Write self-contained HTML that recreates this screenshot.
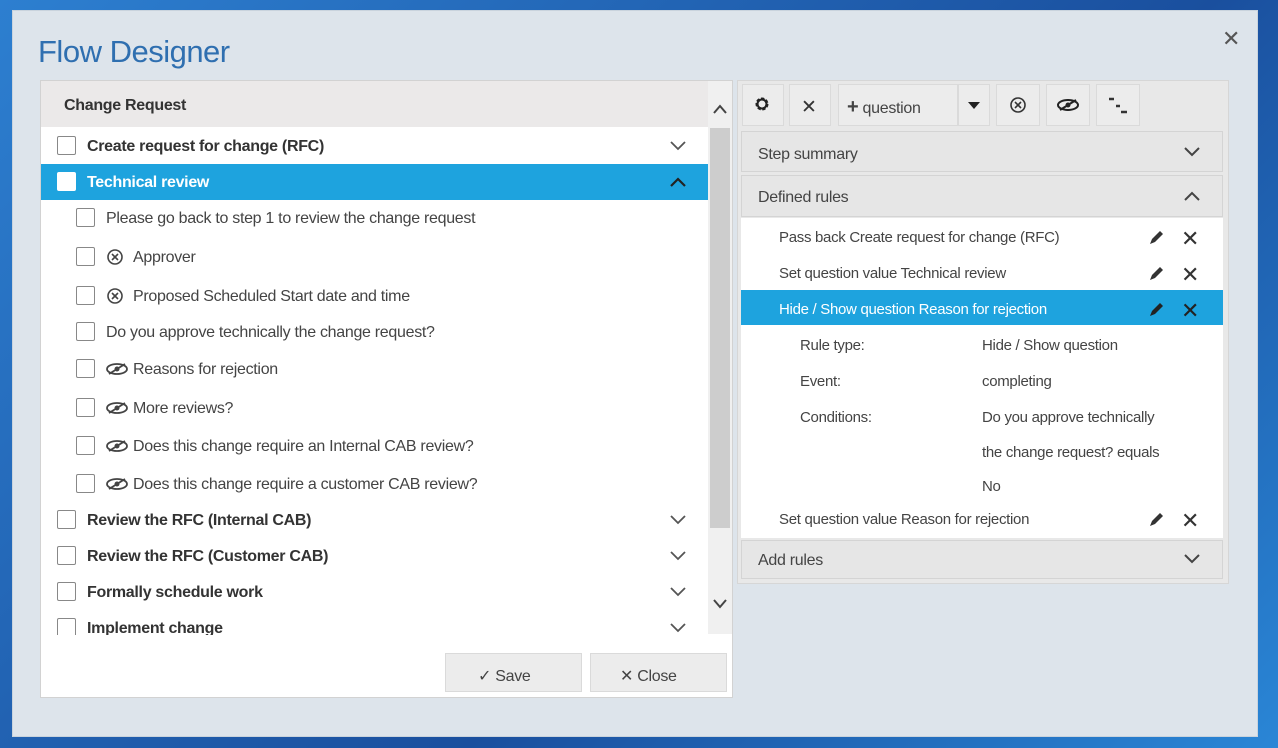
<!DOCTYPE html>
<html><head><meta charset="utf-8"><style>
*{box-sizing:border-box;margin:0;padding:0}
body{width:1278px;height:748px;overflow:hidden;background:linear-gradient(135deg,#2d7fd0,#1a4f9e 60%,#2a86d6);font-family:"Liberation Sans",sans-serif;color:#333;position:relative}
.abs{position:absolute}
#dlg{left:12px;top:10px;width:1246px;height:727px;background:#dde4eb;border:1px solid #c9d3dd}
.t{position:absolute;white-space:nowrap;font-size:16px;letter-spacing:-0.3px;margin-top:2px}
.cb{position:absolute;width:19px;height:19px;border:1.5px solid #888;background:#fff;border-radius:2px}
.chev{position:absolute}
.btn{position:absolute;background:#ececec;border:1px solid #dadada}
</style></head><body>
<div id="dlg" class="abs"></div>
<div class="t" style="left:38px;top:32px;font-size:31px;color:#2f6fb0;letter-spacing:-0.5px">Flow Designer</div>
<div class="t" style="left:1222px;top:24px;font-size:22px;color:#555">✕</div>

<!-- left panel -->
<div class="abs" style="left:40px;top:80px;width:693px;height:618px;background:#fff;border:1px solid #d2d2d2"></div>
<div class="abs" style="left:41px;top:81px;width:667px;height:46px;background:#ebe9e9"></div>
<div class="t" style="left:64px;top:95px;font-weight:bold;font-size:16px">Change Request</div>
<div class="abs" style="left:708px;top:81px;width:24px;height:553px;background:#f0f0f0"></div>
<div class="abs" style="left:710px;top:128px;width:20px;height:400px;background:#cdcdcd"></div>
<svg class="chev" style="left:712px;top:103px" width="16" height="12"><path d="M2 10 L8 3 L14 10" stroke="#444" stroke-width="2" fill="none"/></svg>
<svg class="chev" style="left:712px;top:598px" width="16" height="12"><path d="M2 2 L8 9 L14 2" stroke="#444" stroke-width="2" fill="none"/></svg>

<div class="abs" style="left:41px;top:164px;width:667px;height:36px;background:#1ea3de"></div>

<div class="cb" style="left:57px;top:136px"></div><div class="t" style="left:87px;top:136px;font-weight:bold">Create request for change (RFC)</div>
<svg class="chev" style="left:669px;top:140px" width="18" height="12"><path d="M2 2 L9 9 L16 2" stroke="#555" stroke-width="1.8" fill="none"/></svg>
<div class="cb" style="left:57px;top:172px;border-color:#fff"></div><div class="t" style="left:87px;top:172px;font-weight:bold;color:#fff">Technical review</div>
<svg class="chev" style="left:669px;top:176px" width="18" height="12"><path d="M2 10 L9 3 L16 10" stroke="#222" stroke-width="2.2" fill="none"/></svg>

<div class="cb" style="left:76px;top:208px"></div><div class="t" style="left:106px;top:208px;color:#444">Please go back to step 1 to review the change request</div>
<div class="cb" style="left:76px;top:247px"></div><svg class="abs" style="left:106px;top:248px" width="18" height="18"><circle cx="9" cy="9" r="7" stroke="#444" stroke-width="1.6" fill="none"/><path d="M6 6L12 12M12 6L6 12" stroke="#444" stroke-width="1.6"/></svg><div class="t" style="left:133px;top:247px;color:#444">Approver</div>
<div class="cb" style="left:76px;top:286px"></div><svg class="abs" style="left:106px;top:287px" width="18" height="18"><circle cx="9" cy="9" r="7" stroke="#444" stroke-width="1.6" fill="none"/><path d="M6 6L12 12M12 6L6 12" stroke="#444" stroke-width="1.6"/></svg><div class="t" style="left:133px;top:286px;color:#444">Proposed Scheduled Start date and time</div>
<div class="cb" style="left:76px;top:322px"></div><div class="t" style="left:106px;top:322px;color:#444">Do you approve technically the change request?</div>
<div class="cb" style="left:76px;top:359px"></div><svg class="abs" style="left:105px;top:362px" width="24" height="14"><ellipse cx="12" cy="7" rx="10" ry="5" stroke="#444" stroke-width="1.8" fill="none"/><circle cx="12" cy="7" r="2.5" fill="#444"/><path d="M4 12L20 2" stroke="#444" stroke-width="1.8"/></svg><div class="t" style="left:133px;top:359px;color:#444">Reasons for rejection</div>
<div class="cb" style="left:76px;top:398px"></div><svg class="abs" style="left:105px;top:401px" width="24" height="14"><ellipse cx="12" cy="7" rx="10" ry="5" stroke="#444" stroke-width="1.8" fill="none"/><circle cx="12" cy="7" r="2.5" fill="#444"/><path d="M4 12L20 2" stroke="#444" stroke-width="1.8"/></svg><div class="t" style="left:133px;top:398px;color:#444">More reviews?</div>
<div class="cb" style="left:76px;top:436px"></div><svg class="abs" style="left:105px;top:439px" width="24" height="14"><ellipse cx="12" cy="7" rx="10" ry="5" stroke="#444" stroke-width="1.8" fill="none"/><circle cx="12" cy="7" r="2.5" fill="#444"/><path d="M4 12L20 2" stroke="#444" stroke-width="1.8"/></svg><div class="t" style="left:133px;top:436px;color:#444">Does this change require an Internal CAB review?</div>
<div class="cb" style="left:76px;top:474px"></div><svg class="abs" style="left:105px;top:477px" width="24" height="14"><ellipse cx="12" cy="7" rx="10" ry="5" stroke="#444" stroke-width="1.8" fill="none"/><circle cx="12" cy="7" r="2.5" fill="#444"/><path d="M4 12L20 2" stroke="#444" stroke-width="1.8"/></svg><div class="t" style="left:133px;top:474px;color:#444">Does this change require a customer CAB review?</div>

<div class="cb" style="left:57px;top:510px"></div><div class="t" style="left:87px;top:510px;font-weight:bold">Review the RFC (Internal CAB)</div>
<svg class="chev" style="left:669px;top:514px" width="18" height="12"><path d="M2 2 L9 9 L16 2" stroke="#555" stroke-width="1.8" fill="none"/></svg>
<div class="cb" style="left:57px;top:546px"></div><div class="t" style="left:87px;top:546px;font-weight:bold">Review the RFC (Customer CAB)</div>
<svg class="chev" style="left:669px;top:550px" width="18" height="12"><path d="M2 2 L9 9 L16 2" stroke="#555" stroke-width="1.8" fill="none"/></svg>
<div class="cb" style="left:57px;top:582px"></div><div class="t" style="left:87px;top:582px;font-weight:bold">Formally schedule work</div>
<svg class="chev" style="left:669px;top:586px" width="18" height="12"><path d="M2 2 L9 9 L16 2" stroke="#555" stroke-width="1.8" fill="none"/></svg>
<div class="abs" style="left:41px;top:616px;width:667px;height:19px;overflow:hidden">
<div class="cb" style="left:16px;top:2px"></div><div class="t" style="left:46px;top:2px;font-weight:bold">Implement change</div></div>
<svg class="chev" style="left:669px;top:622px" width="18" height="12"><path d="M2 2 L9 9 L16 2" stroke="#555" stroke-width="1.8" fill="none"/></svg>

<div class="btn" style="left:445px;top:653px;width:137px;height:39px"></div>
<div class="t" style="left:478px;top:664px;color:#444">✓ Save</div>
<div class="btn" style="left:590px;top:653px;width:137px;height:39px"></div>
<div class="t" style="left:620px;top:664px;color:#444">✕ Close</div>

<!-- right panel -->
<div class="abs" style="left:737px;top:80px;width:492px;height:504px;background:#e8e8e8;border:1px solid #d6d6d6"></div>
<div class="btn" style="left:742px;top:84px;width:42px;height:42px"></div><svg class="abs" style="left:754px;top:96px" width="16" height="16"><circle cx="8" cy="8" r="5" stroke="#222" stroke-width="3" fill="none" stroke-dasharray="3 1.5"/><circle cx="8" cy="8" r="4.5" stroke="#222" stroke-width="2" fill="none"/></svg>
<div class="btn" style="left:789px;top:84px;width:42px;height:42px"></div><div class="t" style="left:801px;top:94px;font-size:19px;color:#333">✕</div>
<div class="btn" style="left:838px;top:84px;width:120px;height:42px"></div><div class="t" style="left:847px;top:94px;color:#444"><b style="font-size:20px">+</b> question</div>
<div class="btn" style="left:958px;top:84px;width:32px;height:42px"></div><svg class="abs" style="left:968px;top:102px" width="12" height="8"><path d="M0 0H12L6 7Z" fill="#222"/></svg>
<div class="btn" style="left:996px;top:84px;width:44px;height:42px"></div><svg class="abs" style="left:1009px;top:96px" width="18" height="18"><circle cx="9" cy="9" r="7" stroke="#333" stroke-width="1.6" fill="none"/><path d="M6 6L12 12M12 6L6 12" stroke="#333" stroke-width="1.6"/></svg>
<div class="btn" style="left:1046px;top:84px;width:44px;height:42px"></div><svg class="abs" style="left:1056px;top:98px" width="24" height="14"><ellipse cx="12" cy="7" rx="10" ry="5" stroke="#222" stroke-width="2" fill="none"/><circle cx="12" cy="7" r="2.5" fill="#222"/><path d="M4 12L20 2" stroke="#222" stroke-width="2"/></svg>
<div class="btn" style="left:1096px;top:84px;width:44px;height:42px"></div><svg class="abs" style="left:1106px;top:96px" width="24" height="20"><path d="M3 3h5M10 10h4M15 16h6" stroke="#333" stroke-width="2.4"/></svg>

<div class="abs" style="left:741px;top:131px;width:482px;height:41px;background:#e6e6e6;border:1px solid #d4d4d4"></div>
<div class="t" style="left:758px;top:144px;color:#444">Step summary</div>
<svg class="chev" style="left:1183px;top:146px" width="18" height="12"><path d="M2 2 L9 9 L16 2" stroke="#444" stroke-width="2" fill="none"/></svg>
<div class="abs" style="left:741px;top:175px;width:482px;height:42px;background:#e6e6e6;border:1px solid #d4d4d4"></div>
<div class="t" style="left:758px;top:187px;color:#444">Defined rules</div>
<svg class="chev" style="left:1183px;top:190px" width="18" height="12"><path d="M2 10 L9 3 L16 10" stroke="#444" stroke-width="2" fill="none"/></svg>
<div class="abs" style="left:741px;top:218px;width:482px;height:320px;background:#fff"></div>
<div class="abs" style="left:741px;top:290px;width:482px;height:35px;background:#1ea3de"></div>

<div class="t" style="left:779px;top:227px;font-size:15px;color:#444">Pass back Create request for change (RFC)</div>
<div class="t" style="left:779px;top:263px;font-size:15px;color:#444">Set question value Technical review</div>
<div class="t" style="left:779px;top:299px;font-size:15px;color:#fff">Hide / Show question Reason for rejection</div>
<div class="t" style="left:800px;top:335px;font-size:15px;color:#444">Rule type:</div><div class="t" style="left:982px;top:335px;font-size:15px;color:#444">Hide / Show question</div>
<div class="t" style="left:800px;top:371px;font-size:15px;color:#444">Event:</div><div class="t" style="left:982px;top:371px;font-size:15px;color:#444">completing</div>
<div class="t" style="left:800px;top:407px;font-size:15px;color:#444">Conditions:</div><div class="t" style="left:982px;top:407px;font-size:15px;color:#444">Do you approve technically</div>
<div class="t" style="left:982px;top:442px;font-size:15px;color:#444">the change request? equals</div>
<div class="t" style="left:982px;top:476px;font-size:15px;color:#444">No</div>
<div class="t" style="left:779px;top:509px;font-size:15px;color:#444">Set question value Reason for rejection</div>

<svg class="abs" style="left:1147px;top:228px" width="18" height="18"><path d="M3 16L5 11L13 3L16 6L8 14Z" fill="#333"/></svg><div class="t" style="left:1181px;top:224px;font-size:22px;color:#333">✕</div>
<svg class="abs" style="left:1147px;top:264px" width="18" height="18"><path d="M3 16L5 11L13 3L16 6L8 14Z" fill="#333"/></svg><div class="t" style="left:1181px;top:260px;font-size:22px;color:#333">✕</div>
<svg class="abs" style="left:1147px;top:300px" width="18" height="18"><path d="M3 16L5 11L13 3L16 6L8 14Z" fill="#222"/></svg><div class="t" style="left:1181px;top:296px;font-size:22px;color:#222">✕</div>
<svg class="abs" style="left:1147px;top:510px" width="18" height="18"><path d="M3 16L5 11L13 3L16 6L8 14Z" fill="#333"/></svg><div class="t" style="left:1181px;top:506px;font-size:22px;color:#333">✕</div>

<div class="abs" style="left:741px;top:540px;width:482px;height:39px;background:#e6e6e6;border:1px solid #d4d4d4"></div>
<div class="t" style="left:758px;top:550px;color:#444">Add rules</div>
<svg class="chev" style="left:1183px;top:553px" width="18" height="12"><path d="M2 2 L9 9 L16 2" stroke="#444" stroke-width="2" fill="none"/></svg>
</body></html>
